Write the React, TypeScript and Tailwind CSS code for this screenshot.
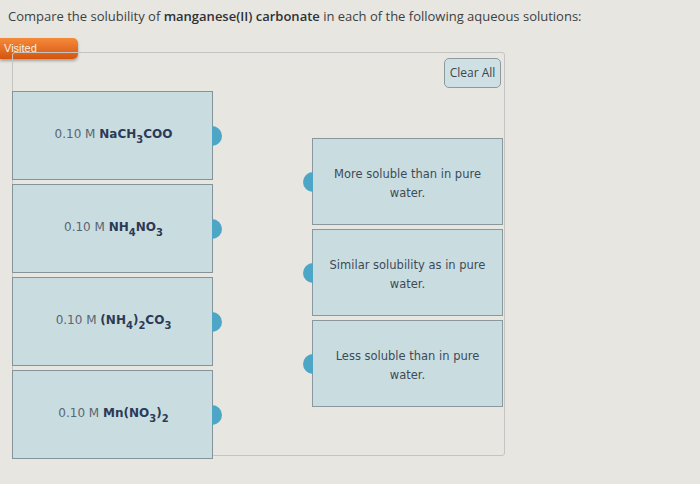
const sub = "text-[10px] align-[-2px]";

const leftItems = [
  { id: "a", formula: (
    <>
      NaCH<sub className={sub}>3</sub>COO
    </>
  ) },
  { id: "b", formula: (
    <>
      NH<sub className={sub}>4</sub>NO<sub className={sub}>3</sub>
    </>
  ) },
  { id: "c", formula: (
    <>
      (NH<sub className={sub}>4</sub>)<sub className={sub}>2</sub>CO<sub className={sub}>3</sub>
    </>
  ) },
  { id: "d", formula: (
    <>
      Mn(NO<sub className={sub}>3</sub>)<sub className={sub}>2</sub>
    </>
  ) },
];

const rightItems = [
  "More soluble than in pure water.",
  "Similar solubility as in pure water.",
  "Less soluble than in pure water.",
];

function Knob({ side }: { side: "left" | "right" }) {
  // half circle handle stuck to the box edge
  return side === "right" ? (
    <div className="absolute right-[-10px] top-1/2 -translate-y-1/2 w-[10px] h-[20px] rounded-r-full bg-[#4ea6c6]" />
  ) : (
    <div className="absolute left-[-10px] top-1/2 -translate-y-1/2 w-[10px] h-[20px] rounded-l-full bg-[#4ea6c6]" />
  );
}

export default function App() {
  return (
    <div className="w-[700px] h-[484px] bg-[#e8e6e0] overflow-hidden font-['DejaVu_Sans',sans-serif]">
      <p className="pl-[8px] pt-[7px] text-[13px] leading-[18px] text-[#3c3f44] font-['Open_Sans',sans-serif]">
        Compare the solubility of <b className="font-semibold text-[#2e3135]">manganese(II) carbonate</b> in each of the following aqueous solutions:
      </p>

      <div className="mt-[13px] w-[78px] h-[21px] rounded-r-[5px] bg-gradient-to-b from-[#f58a3a] to-[#d4540c] shadow-[0_2px_3px_rgba(0,0,0,0.3)] pl-[4px] flex items-center">
        <span className="text-[11px] text-[#fdf0e4] font-['Liberation_Sans',sans-serif]">Visited</span>
      </div>

      <div className="ml-[12px] mt-[-7px] w-[493px] h-[404px] border border-[#c4c4c2] rounded-[3px] flex flex-col">
        <div className="flex justify-end pr-[3px] pt-[5px]">
          <button className="w-[57px] h-[30px] rounded-[5px] bg-[#cfe0e4] border border-[#8c9aa0] text-[12px] text-[#3a4650] font-['Open_Sans',sans-serif]">
            Clear All
          </button>
        </div>

        <div className="flex">
          <div className="mt-[3px] ml-[-1px] flex flex-col gap-[4px]">
            {leftItems.map((item) => (
              <div
                key={item.id}
                className="relative w-[201px] h-[89px] bg-[#c9dde0] border-[1.5px] border-[#84939a] flex items-center justify-center"
              >
                <span className="text-[12px] text-[#5a6570] pl-[2px] -mt-[3px]">
                  0.10 M <b className="font-bold text-[#2c3a56]">{item.formula}</b>
                </span>
                <Knob side="right" />
              </div>
            ))}
          </div>

          <div className="ml-[99px] mt-[50px] flex flex-col gap-[4px]">
            {rightItems.map((t) => (
              <div
                key={t}
                className="relative w-[191px] h-[87px] bg-[#c9dde0] border-[1.5px] border-[#8a989e] flex justify-center pt-[26px]"
              >
                <p className="w-[170px] text-center text-[11.5px] leading-[19px] text-[#3e4a58]">{t}</p>
                <Knob side="left" />
              </div>
            ))}
          </div>
        </div>
      </div>
    </div>
  );
}
